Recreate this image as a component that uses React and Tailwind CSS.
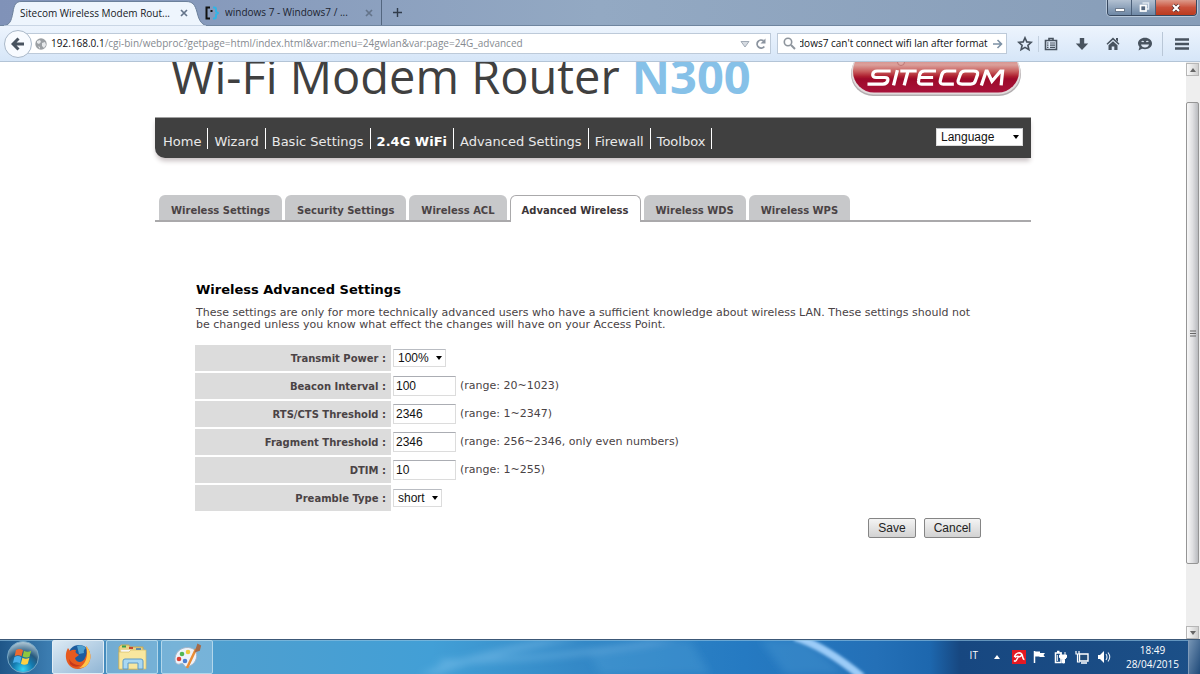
import React from "react";

const ui = "font-['Open_Sans','Noto_Sans',sans-serif]";
const verdana = "font-['DejaVu_Sans',sans-serif]";
const arial = "font-['Liberation_Sans',Arial,sans-serif]";

function CloseMark() {
  return (
    <svg viewBox="0 0 8 8" className="size-2">
      <path d="M1 1l6 6M7 1l-6 6" stroke="#64748a" strokeWidth="1.7" />
    </svg>
  );
}

function BrowserTabs() {
  return (
    <div className="flex h-[26px] shrink-0 items-stretch border-b border-[#6f859f] bg-linear-to-r from-[#8092b8] via-[#93a9c3] to-[#879db8]">
      <div className="relative -mb-px ml-1 flex w-[202px] items-center pl-4">
        <svg viewBox="0 0 202 26" preserveAspectRatio="none" className="absolute inset-0 size-full">
          <path d="M-4 26C6 26 7 22 9 12C10 5 12 1.500 17 1.500H182C189 1.500 191 5 193 12C195 21 198 26 206 26Z" fill="#eef5fd" stroke="#6b809b" strokeWidth="1" />
          <path d="M-6 26.500H210" stroke="#e8f2fd" strokeWidth="2" />
        </svg>
        <a href="#sitecom" className="relative w-[160px] truncate text-[10px] text-[#16191d]">Sitecom Wireless Modem Rout...</a>
        <button type="button" aria-label="Close tab" className="relative"><CloseMark /></button>
      </div>
      <div className="flex w-[176px] items-center border-r border-[#53667f]">
        <svg viewBox="0 0 14 14" className="-ml-px size-[14px]">
          <path d="M5 1.500H1.500V12.500H5" fill="none" stroke="#111" strokeWidth="2" />
          <path d="M8 1.500h1.500q1.500 0 1.500 2v2l2 1.500-2 1.500v2q0 2-1.500 2H8" fill="none" stroke="#31b4e6" strokeWidth="2" />
          <rect x="5.500" y="4" width="2" height="2" fill="#111" />
        </svg>
        <a href="#windows7" className="ml-[6px] w-[140px] truncate text-[10px] text-[#1c2430]">windows 7 - Windows7 / ...</a>
        <button type="button" aria-label="Close tab"><CloseMark /></button>
      </div>
      <button type="button" aria-label="New tab" className="ml-[11px]">
        <svg viewBox="0 0 9 9" className="size-[9px]"><path d="M4.500 0v9M0 4.500h9" stroke="#303c4b" strokeWidth="1.400" /></svg>
      </button>
      <div className="mr-[3px] ml-auto flex h-4 overflow-hidden rounded-b border border-t-0 border-[#37485f] shadow-[0_0_0_1px_#b7c7d9]">
        <button type="button" aria-label="Minimize" className="flex w-6 items-center justify-center border-r border-[#4b5f79] bg-linear-to-b from-[#b3c1d2] to-[#6d87a5]">
          <svg viewBox="0 0 12 12" className="size-3"><path d="M1.500 6.500h9v3h-9z" fill="#fff" stroke="#47566b" strokeWidth=".7" /></svg>
        </button>
        <button type="button" aria-label="Restore" className="flex w-6 items-center justify-center border-r border-[#4b5f79] bg-linear-to-b from-[#b3c1d2] to-[#6d87a5]">
          <svg viewBox="0 0 12 12" className="size-3"><path d="M4.500 1h6v6h-2" fill="none" stroke="#dfe7f0" strokeWidth="1.500" /><rect x="2.500" y="3.500" width="5.500" height="5.500" fill="#55677e" stroke="#fff" strokeWidth="1.700" /></svg>
        </button>
        <button type="button" aria-label="Close" className="flex w-10 items-center justify-center bg-linear-to-b from-[#dc9a8b] via-[#c9503a] to-[#bb3a1d]">
          <svg viewBox="0 0 12 12" className="size-3"><path d="M3 3l6 6M9 3l-6 6" stroke="#4f2a2b" strokeWidth="3.600" /><path d="M3 3l6 6M9 3l-6 6" stroke="#fff" strokeWidth="2.200" /></svg>
        </button>
      </div>
    </div>
  );
}

function BrowserToolbar() {
  return (
    <div className="flex h-9 shrink-0 items-center border-b border-[#b3c4d6] bg-linear-to-b from-[#edf4fd] to-[#d6e6f8] pl-1">
      <button type="button" aria-label="Back" className="z-10 flex size-7 shrink-0 items-center justify-center rounded-full border border-[#a9b8c9] bg-[#f8fbff]">
        <svg viewBox="0 0 14 14" className="size-[14px]"><path d="M7.500 1.500L2 7l5.500 5.500M3 7h10" fill="none" stroke="#48535f" strokeWidth="3" /></svg>
      </button>
      <div className="-ml-2 flex h-[21px] min-w-0 flex-1 items-center border border-[#bdcad9] bg-white pl-[10px]">
        <svg viewBox="0 0 12 12" className="size-3 shrink-0"><circle cx="6" cy="6" r="5.700" fill="#9b9fa3" /><path d="M2 3l3-1 1 2-2 2-2-1zM7 5l3-1 1 3-2 3-2-2zM3 8l2 1v2z" fill="#e6e8ea" /></svg>
        <a href="#address" className="ml-1 flex min-w-0 flex-1 text-[10px] whitespace-nowrap text-[#858a90]">
          <span className="text-[#0c0d0f]">192.168.0.1</span>
          <span>/cgi-bin/webproc?getpage=html/index.html&amp;var:menu=24gwlan&amp;var:page=24G_advanced</span>
        </a>
        <button type="button" aria-label="History"><svg viewBox="0 0 10 8" className="h-2 w-[10px]"><path d="M1 1.500h8L5 7z" fill="#d6dbe1" stroke="#a2abb6" /></svg></button>
        <button type="button" aria-label="Reload" className="mr-[3px] ml-[5px]">
          <svg viewBox="0 0 12 12" className="size-3"><path d="M9.300 8.500A4 4 0 1 1 8.500 2.800" fill="none" stroke="#8b949f" strokeWidth="1.800" /><path d="M10.500 0.500v5h-5z" fill="#8b949f" /></svg>
        </button>
      </div>
      <div className="ml-[6px] flex h-[21px] w-[230px] shrink-0 items-center border border-[#bdcad9] bg-white pl-[5px]">
        <svg viewBox="0 0 13 13" className="size-[13px] shrink-0"><circle cx="5" cy="5" r="3.700" fill="none" stroke="#8e959d" strokeWidth="1.600" /><path d="M8 8l4 4" stroke="#8e959d" strokeWidth="2" /></svg>
        <input type="text" aria-label="Search" defaultValue="dows7 can't connect wifi lan after format" className="ml-1 w-[190px] -indent-[2px] text-[10px] text-[#0f1114] outline-none" />
        <button type="button" aria-label="Search" className="ml-[3px]"><svg viewBox="0 0 10 10" className="size-[10px]"><path d="M0 5h8M4.500 1L8.500 5l-4 4" fill="none" stroke="#7d91a5" strokeWidth="1.600" /></svg></button>
      </div>
      <div className="flex items-center pr-[11px]">
        <button type="button" aria-label="Bookmark" className="ml-[10px]"><svg viewBox="0 0 16 16" className="size-4"><path d="M8 1.800l1.800 4.100 4.500.4-3.400 3 1 4.400L8 11.400l-3.900 2.300 1-4.400-3.400-3 4.500-.4z" fill="none" stroke="#48535f" strokeWidth="1.600" /></svg></button>
        <span className="ml-[5px] h-4 border-l border-[#c3d0df]" />
        <button type="button" aria-label="Bookmarks list" className="ml-[5px]"><svg viewBox="0 0 14 14" className="size-[14px]"><path d="M1.500 3.500h11v9h-11zM5 3V1.500h4V3" fill="none" stroke="#48535f" strokeWidth="1.600" /><path d="M3 6h1.500M6 6h5M3 8.200h1.500M6 8.200h5M3 10.400h1.500M6 10.400h5" stroke="#48535f" strokeWidth="1.200" /></svg></button>
        <button type="button" aria-label="Downloads" className="ml-[17px]"><svg viewBox="0 0 14 14" className="size-[14px]"><path d="M4.800 1h4.400v5.500h4L7 13 .8 6.500h4z" fill="#48535f" /></svg></button>
        <button type="button" aria-label="Home" className="ml-[17px]"><svg viewBox="0 0 14 14" className="size-[14px]"><path d="M7 .5l6.500 6.300-1 1L7 2.800 1.500 7.800l-1-1z" fill="#48535f" /><path d="M10 1h2v4l-2-2zM7 4.200l4.500 4V13H8.300V9.500H5.700V13H2.500V8.200z" fill="#48535f" /></svg></button>
        <button type="button" aria-label="Chat" className="ml-[17px]"><svg viewBox="0 0 16 14" className="h-[14px] w-4"><path d="M8 .8c4 0 7 2.500 7 5.700s-3 5.700-7 5.700c-1 0-2-.2-3-.5L1.500 13.500l1-3.400C1.500 9 1 7.800 1 6.500 1 3.300 4 .8 8 .8z" fill="#48535f" /><path d="M4 7.500h8c-.4 2-2 3-4 3s-3.600-1-4-3z" fill="#dfe9f5" /><path d="M4.700 5q1-1.500 2 0M9.300 5q1-1.500 2 0" fill="none" stroke="#dfe9f5" strokeWidth="1.100" /></svg></button>
        <span className="ml-[9px] h-6 border-l border-[#b9c7d7]" />
        <button type="button" aria-label="Menu" className="ml-3"><svg viewBox="0 0 14 12" className="h-3 w-[14px]"><path d="M0 1.500h14M0 6h14M0 10.500h14" stroke="#48535f" strokeWidth="2.400" /></svg></button>
      </div>
    </div>
  );
}

function SelectBox({ id, label, options, className }) {
  return (
    <span className="relative inline-flex h-[18px]">
      <select id={id} aria-label={label} className={"h-[18px] appearance-none border border-[#dcdcdc] border-t-[#b9bcc2] bg-white pl-1 text-xs leading-4 text-[#111] " + arial + " " + className}>
        {options.map((o) => <option key={o}>{o}</option>)}
      </select>
      <svg viewBox="0 0 6 4" className="pointer-events-none absolute inset-y-0 right-1 my-auto h-1 w-[6px]"><path d="M0 0h6L3 4z" fill="#000" /></svg>
    </span>
  );
}

function SitecomLogo() {
  return (
    <svg viewBox="0 0 172 48" className="h-12 w-[172px]" role="img" aria-label="Sitecom">
      <defs>
        <linearGradient id="pill" x1="0" y1="0" x2="0" y2="1">
          <stop offset="0" stopColor="#d0716c" /><stop offset=".35" stopColor="#dba09b" /><stop offset=".5" stopColor="#c9605f" /><stop offset=".62" stopColor="#ae1f30" /><stop offset=".68" stopColor="#9d0a2a" /><stop offset="1" stopColor="#a8123a" />
        </linearGradient>
      </defs>
      <rect x="1" y="3" width="170" height="44" rx="22" fill="#b3aeb0" />
      <rect x="1.500" y="1" width="169" height="44.500" rx="22" fill="#e2dadb" />
      <rect x="3" y="1" width="166" height="42.500" rx="21" fill="url(#pill)" />
      <g fill="none" stroke="#fff" strokeWidth="3.400" transform="translate(3 2.500) scale(.965 .93)">
        <path d="M39 21H25q-4 0-4.500 3.500T24 28h9q4 0 3 3.500T31 35H15" />
        <path d="M46 20l-4 16.500M49 21h17M57 21l-4 15.500" />
        <path d="M86 21H74q-4 0-5 4l-1 6q-1 4 3 4h12M69 28h14" />
        <path d="M107 21H97q-4 0-5 4l-1.500 6q-1 4 3 4h11" />
        <path d="M116 21h9q5 0 4 4l-2 6q-1 4-5 4h-9q-5 0-4-4l2-6q1-4 5-4z" />
        <path d="M133 36.500l5-15.500h1l5 11 9-11h2l-1.500 15.500" />
      </g>
      <circle cx="51" cy="13" r="3.500" fill="#dfaaa6" stroke="#bd7775" />
    </svg>
  );
}

const menu = ["Home", "Wizard", "Basic Settings", "2.4G WiFi", "Advanced Settings", "Firewall", "Toolbox"];
const tabs = ["Wireless Settings", "Security Settings", "Wireless ACL", "Advanced Wireless", "Wireless WDS", "Wireless WPS"];
const rows = [
  { id: "power", label: "Transmit Power :", options: ["100%", "50%"], width: "w-[53px]" },
  { id: "beacon", label: "Beacon Interval :", value: "100", hint: "(range: 20~1023)" },
  { id: "rts", label: "RTS/CTS Threshold :", value: "2346", hint: "(range: 1~2347)" },
  { id: "fragment", label: "Fragment Threshold :", value: "2346", hint: "(range: 256~2346, only even numbers)" },
  { id: "dtim", label: "DTIM :", value: "10", hint: "(range: 1~255)" },
  { id: "preamble", label: "Preamble Type :", options: ["short", "long"], width: "w-[49px]" },
];

function RouterPage() {
  return (
    <main className={"mx-auto w-full max-w-[876px] text-[#4a4345] " + verdana}>
      <header className="flex h-[38px] items-end justify-between pr-[9px] pl-4">
        <h1 className="font-['Open_Sans','Noto_Sans',sans-serif] text-[47px] leading-[48px] whitespace-nowrap text-[#404040]">Wi-Fi Modem Router <b className="text-[#86c1e8]">N300</b></h1>
        <div className="mb-[3px]"><SitecomLogo /></div>
      </header>
      <nav className="mt-[17px] flex h-[41px] items-center rounded-bl-[10px] border-t border-[#a0a0a0] bg-[#404040] pr-2 pl-[2px] shadow-[0_4px_5px_-1px_#c8c0c2]">
        {menu.map((m) => (
          <a key={m} href="#menu" className={"h-[21px] border-r border-white px-[6px] pt-[6px] text-[13px] leading-4 whitespace-nowrap " + (m === "2.4G WiFi" ? "font-bold text-white" : "text-[#e9e9e9]")}>{m}</a>
        ))}
        <span className="ml-auto flex pb-[2px]"><SelectBox id="language" label="Language" options={["Language"]} className="w-[87px]" /></span>
      </nav>
      <div className="mt-[37px] flex h-[27px] items-stretch gap-[3px] border-b-2 border-[#aaa9ab] pl-1">
        {tabs.map((t) => (
          <a key={t} href="#tab" className={"rounded-t-md text-[10px] leading-4 font-bold whitespace-nowrap " + (t === "Advanced Wireless" ? "-mb-[2px] rounded-t-lg border border-b-0 border-[#aaa9ab] bg-white px-[11px] pt-[7px] text-[#3b3537]" : "bg-[#c7c8ca] px-3 pt-2")}>{t}</a>
        ))}
      </div>
      <section className="pr-[50px] pl-[38px]">
        <h2 className="mt-[58px] pl-[3px] text-[13px] leading-5 font-bold text-black">Wireless Advanced Settings</h2>
        <p className="mt-[7px] pl-[3px] text-[11px] leading-3">These settings are only for more technically advanced users who have a sufficient knowledge about wireless LAN. These settings should not be changed unless you know what effect the changes will have on your Access Point.</p>
        <table className="mt-3 border-separate border-spacing-[2px] text-[11px]">
          <tbody>
            {rows.map((r) => (
              <tr key={r.id} className="h-[26px]">
                <th scope="row" className="w-[196px] bg-[#dcdcdc] p-0 pr-[5px] text-right text-[10px] font-bold"><label htmlFor={r.id}>{r.label}</label></th>
                <td className="p-0 whitespace-nowrap">
                  <div className="flex h-[26px] items-center">
                    {r.options ? (
                      <SelectBox id={r.id} label={r.label} options={r.options} className={r.width} />
                    ) : (
                      <>
                        <input id={r.id} type="text" defaultValue={r.value} className={"h-5 w-[63px] border border-[#dcdcdc] border-t-[#abadb3] px-[2px] text-xs text-[#111] " + arial} />
                        <span className="ml-1">{r.hint}</span>
                      </>
                    )}
                  </div>
                </td>
              </tr>
            ))}
          </tbody>
        </table>
        <div className={"mt-[5px] flex justify-end gap-2 text-xs text-[#222] " + arial}>
          <button type="button" className="h-5 rounded-xs border border-[#858585] bg-linear-to-b from-[#f4f4f4] to-[#d2d2d2] px-[9px]">Save</button>
          <button type="button" className="h-5 rounded-xs border border-[#858585] bg-linear-to-b from-[#f4f4f4] to-[#d2d2d2] px-[9px]">Cancel</button>
        </div>
      </section>
    </main>
  );
}

function Scrollbar() {
  const cap = "flex size-[13px] shrink-0 items-center justify-center border border-[#b6b6b6] bg-linear-to-r from-[#fafafa] to-[#cfcfcf]";
  return (
    <div className="flex w-[14px] shrink-0 flex-col bg-[#eeeeee] pt-px">
      <button type="button" aria-label="Scroll up" className={cap}><svg viewBox="0 0 6 4" className="h-1 w-[6px]"><path d="M0 4h6L3 0z" fill="#666" /></svg></button>
      <div className="h-[26px] shrink-0" />
      <div className="flex min-h-0 w-[13px] grow-[461] basis-0 items-center justify-center rounded-xs border border-[#959595] bg-linear-to-r from-[#f8f8f8] via-[#e0e0e2] to-[#b9bbbf]">
        <svg viewBox="0 0 6 7" className="h-[7px] w-[6px]"><path d="M0 1h6M0 3.500h6M0 6h6" stroke="#666" /></svg>
      </div>
      <div className="grow-[62] basis-0" />
      <button type="button" aria-label="Scroll down" className={cap}><svg viewBox="0 0 6 4" className="h-1 w-[6px]"><path d="M0 0h6L3 4z" fill="#666" /></svg></button>
    </div>
  );
}

function StartOrb() {
  return (
    <svg viewBox="0 0 34 34" className="size-[34px]">
      <defs>
        <radialGradient id="orb" cx=".5" cy=".9" r=".9"><stop offset="0" stopColor="#35d5f5" /><stop offset=".35" stopColor="#137bb1" /><stop offset=".6" stopColor="#26597e" /><stop offset="1" stopColor="#b9cfdc" /></radialGradient>
      </defs>
      <circle cx="17" cy="17" r="15.500" fill="url(#orb)" stroke="#75a7c6" />
      <path d="M10 10q3.500-2 7 .2l-1.400 6q-3.400-2-6.900-.2z" fill="#ee6a30" />
      <path d="M18 10.700q3.500 2 7.200 0l-1.700 6q-3.500 1.800-6.900-.2z" fill="#8fc640" />
      <path d="M8.500 17q3.500-2 6.900.2l-1.500 6q-3.400-2-7-.2z" fill="#4aaeea" />
      <path d="M16.400 17.700q3.400 2 7 0l-1.600 6q-3.400 2-6.900 0z" fill="#fdd044" />
    </svg>
  );
}

function FirefoxIcon() {
  return (
    <svg viewBox="0 0 28 28" className="size-7">
      <circle cx="15" cy="13" r="11" fill="#1b5c9e" />
      <path d="M13 3q5-2 9 2-3 2-2 5l-5 1z" fill="#4fa0d0" />
      <path d="M22 3c5 5 6 13 2 18-5 6-14 7-19 1C1 17 1 10 4 5l2 3q3-2 6-1-1 2 0 3l3 2-4 3q1 4 5 4 4-1 5-4c2-3 2-8 1-12z" fill="#e65a1f" />
      <path d="M22 3c5 5 6 13 2 18-2 3-6 4-9 4 6-3 10-11 7-22z" fill="#ffc54a" />
      <path d="M5 16q4 7 12 6-6 4-11-1z" fill="#c6381c" />
    </svg>
  );
}

function FolderIcon() {
  return (
    <svg viewBox="0 0 30 28" className="h-7 w-[30px]">
      <path d="M2 4l2-2h8l1 2h13v22H2z" fill="#ead383" stroke="#c6a853" />
      <path d="M4 7h23v18H4z" fill="#fff" stroke="#ddd" strokeWidth=".5" />
      <path d="M2 9h10l2-2h15v19H2z" fill="#f8e79f" stroke="#d4bb69" strokeWidth=".7" />
      <path d="M5 3.500h4" stroke="#33a24c" strokeWidth="2" /><path d="M12 5h4" stroke="#c6472d" strokeWidth="2" /><path d="M19 6h5" stroke="#3777b5" strokeWidth="1.500" />
      <path d="M6 26v-8q0-2 2-2h16q2 0 2 2v8h-5v-6H11v6z" fill="#a9d8f2" stroke="#5c9ac6" />
    </svg>
  );
}

function PaintIcon() {
  return (
    <svg viewBox="0 0 30 28" className="h-7 w-[30px]">
      <path d="M3 15C4 7 12 3 19 5c7 2 7 10 3 15-4 4-9 5-10 2-1-2-2-2-4-1-4 1-5-2-5-6z" fill="#eef3fa" stroke="#a3b5c9" />
      <circle cx="7" cy="16" r="2.300" fill="#dd4335" /><circle cx="10" cy="11" r="2.300" fill="#51b653" /><circle cx="16" cy="9" r="2.300" fill="#f0c93d" /><circle cx="13" cy="18" r="2.300" fill="#4b7fd0" />
      <path d="M15 25l9-19" stroke="#e98c35" strokeWidth="2.500" /><path d="M24 8l2-6 2 1-1 4z" fill="#a56b49" stroke="#a56b49" strokeWidth="2" />
    </svg>
  );
}

function Taskbar() {
  const task = "flex h-[34px] w-[52px] items-center justify-center rounded-xs border ";
  return (
    <footer className="relative flex h-[35px] shrink-0 items-center border-t border-[#3c5877] bg-[#2b86c8]">
      <svg viewBox="0 0 1200 35" preserveAspectRatio="none" className="absolute inset-0 size-full">
        <defs>
          <linearGradient id="bar" x1="0" x2="1" y1="0" y2="0">
            <stop offset="0" stopColor="#1f5688" /><stop offset=".04" stopColor="#3b7cb0" /><stop offset=".15" stopColor="#519fce" /><stop offset=".36" stopColor="#429fd6" /><stop offset=".48" stopColor="#3489c7" /><stop offset=".62" stopColor="#257ac2" /><stop offset=".73" stopColor="#2470b7" /><stop offset=".775" stopColor="#1d67ae" /><stop offset=".8" stopColor="#174780" /><stop offset="1" stopColor="#1c5088" />
          </linearGradient>
          <filter id="soft"><feGaussianBlur stdDeviation="1.500" /></filter>
          <filter id="haze"><feGaussianBlur stdDeviation="4" /></filter>
        </defs>
        <path d="M0 0h1200v35H0z" fill="url(#bar)" />
        <g filter="url(#haze)">
          <path d="M440 35Q490 15 580 0H540Q460 16 420 35M440 26Q590 20 680 0H650Q560 17 440 20" fill="#a1d8f7" opacity=".3" />
          <path d="M590 14L690 0l20 35H600zM760 0h45l40 35h-60z" fill="#57a4dc" opacity=".3" />
        </g>
        <path d="M795-3Q824 6 862 38" fill="none" stroke="#9bccf8" strokeWidth="8" filter="url(#soft)" />
        <path d="M0 .5h1200" stroke="#8fc1df" opacity=".65" />
      </svg>
      <button type="button" aria-label="Start" className="relative ml-[6px]"><StartOrb /></button>
      <div className="relative ml-3 flex gap-[2px]">
        <button type="button" aria-label="Firefox" className={task + "border-[#e0edf6] bg-linear-to-br from-[#dceaf4] to-[#91b6d5]"}><FirefoxIcon /></button>
        <button type="button" aria-label="Explorer" className={task + "border-[#b2d7eb] bg-[#91c1df]/60"}><FolderIcon /></button>
        <button type="button" aria-label="Paint" className={task + "ml-px border-[#b2d7eb] bg-[#91c1df]/60"}><PaintIcon /></button>
      </div>
      <div className="relative ml-auto flex h-full items-center text-white">
        <span className="mr-4 mb-1 text-[10px]">IT</span>
        <svg viewBox="0 0 6 4" className="mr-3 h-1 w-[6px]"><path d="M0 4h6L3 0z" fill="#fff" /></svg>
        <svg viewBox="0 0 14 14" className="mr-[7px] size-[14px]"><path d="M0 0h14v14H0z" fill="#e31922" /><path d="M2.500 7C3 3 8 1.500 10 4.500c1 2 .5 5 2.500 5M3 7.500q1.500-2 3.500-1t3.500-2M6.500 6.500L4.500 10q-1 2-2.500.500" fill="none" stroke="#fff" strokeWidth="1.500" /></svg>
        <svg viewBox="0 0 13 14" className="mr-2 h-[14px] w-[13px]"><path d="M1.500 1v12" stroke="#fff" strokeWidth="1.500" /><path d="M2 1.500h5V3h5L10.500 5l1.500 2H6.500V6.500H2z" fill="#fff" /></svg>
        <svg viewBox="0 0 13 14" className="mr-2 h-[14px] w-[13px]"><path d="M1.500 3h5.500v9.500H1.500zM3 1.500h2.500" fill="none" stroke="#fff" strokeWidth="1.500" /><path d="M3.300 5v6" stroke="#fff" /><path d="M5.500 5h7v2.500l-2 2V13h-2V9.500l-3-2zM7 2v3M11 2v3" fill="#fff" stroke="#fff" /></svg>
        <svg viewBox="0 0 14 14" className="mr-2 size-[14px]"><path d="M4.500 4h8.500v7H4.500zM6 13h6" fill="#214c79" stroke="#fff" strokeWidth="1.400" /><path d="M1 1v3h3V1M2.500 4v8H5" fill="none" stroke="#fff" strokeWidth="1.200" /></svg>
        <svg viewBox="0 0 14 14" className="mr-[15px] size-[14px]"><path d="M1 5h2l4-4v12L3 9H1z" fill="#fff" /><path d="M9 4q2 3 0 6M11 2.500q3.500 4.500 0 9" fill="none" stroke="#e5edf6" strokeWidth="1.100" /></svg>
        <time dateTime="2015-04-28T18:49" className="mr-[9px] flex flex-col text-center text-[10px] leading-[14px]"><span>18:49</span><span>28/04/2015</span></time>
        <button type="button" aria-label="Show desktop" className="h-full w-3 border-l border-[#809bb9] bg-linear-to-br from-[#7594b4] to-[#1e4a79]" />
      </div>
    </footer>
  );
}

export default function App() {
  return (
    <div className={"flex h-screen flex-col overflow-hidden bg-white " + ui}>
      <BrowserTabs />
      <BrowserToolbar />
      <div className="flex min-h-0 flex-1">
        <div className="min-w-0 flex-1 overflow-hidden"><RouterPage /></div>
        <Scrollbar />
      </div>
      <Taskbar />
    </div>
  );
}
